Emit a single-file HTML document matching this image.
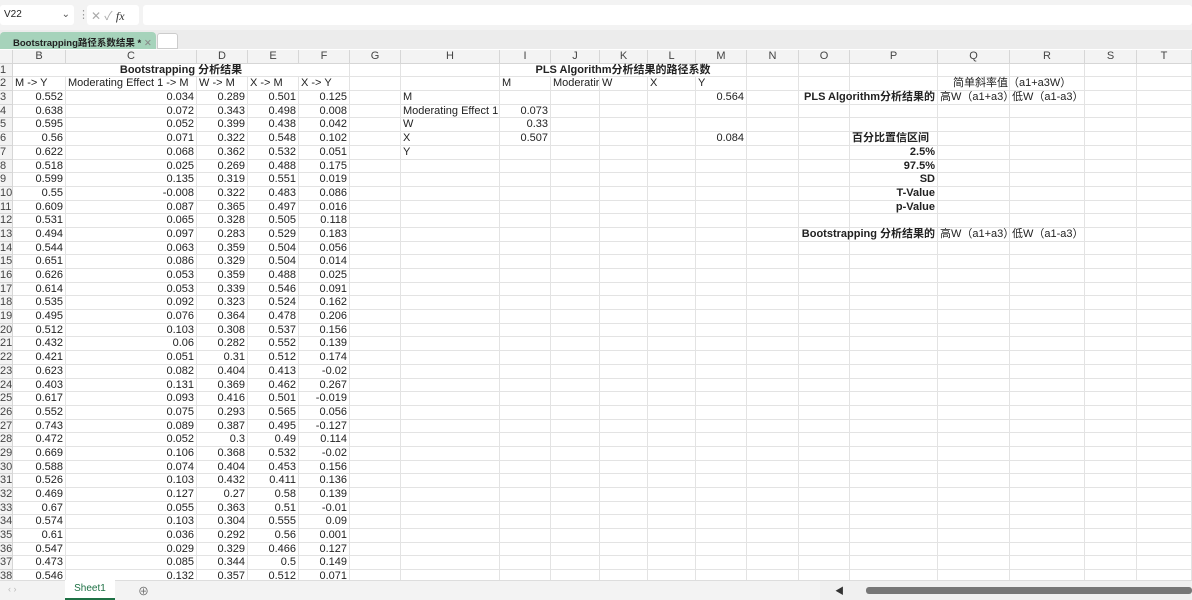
<!DOCTYPE html><html><head><meta charset="utf-8"><style>
*{margin:0;padding:0;box-sizing:border-box}
body{width:1192px;height:600px;overflow:hidden;background:#fff;font-family:"Liberation Sans","Noto Sans CJK SC",sans-serif;font-size:11px;color:#222;position:relative}
.top{position:absolute;left:0;top:0;width:1192px;height:30px;background:#f3f3f3}
.nb{position:absolute;left:0;top:5px;width:74px;height:20px;background:#fff;border-radius:3px;font-size:10px;padding:4px 4px}
.fx{position:absolute;left:87px;top:5px;width:52px;height:20px;background:#fff;border-radius:3px;color:#aaa;font-size:12px;padding:2px 4px}
.fb{position:absolute;left:143px;top:5px;width:1049px;height:20px;background:#fff;border-radius:3px}
.tabs{position:absolute;left:0;top:30px;width:1192px;height:19px;background:#ececec}
.t1{position:absolute;left:0;top:2px;width:156px;height:17px;background:#a6d3bb;border-radius:4px 4px 0 0;font-size:9.5px;font-weight:bold;padding:3px 0 0 13px;color:#222}
.t2{position:absolute;left:157px;top:3px;width:21px;height:16px;background:#fff;border:1px solid #ccc;border-radius:3px 3px 0 0}
.grid{position:absolute;left:0;top:50px}
.r{display:flex;height:13.7px}
.r span{display:block;position:relative;height:100%;border-right:1px solid #e3e3e3;border-bottom:1px solid #e3e3e3;white-space:nowrap;overflow:hidden;line-height:13px;padding:0 2px}
.h span{background:#f3f3f3;text-align:center;color:#444;border-color:#d6d6d6}
.r span:first-child{background:#f3f3f3;color:#444;padding:0;text-align:left;border-color:#d6d6d6;width:13px}
.n{text-align:right}
.b{font-weight:bold}
.r span.ov{overflow:visible}
.ov i{position:absolute;right:2px;top:0;font-style:normal}
.bot{position:absolute;left:0;top:580px;width:1192px;height:20px;background:#f3f3f3;border-top:1px solid #ddd}
</style></head><body>
<div class="top"><div class="nb">V22<span style="float:right;color:#555">⌄</span></div><span style="position:absolute;left:78px;top:8px;color:#999">⋮</span><div class="fx">✕ ✓ <i style="font-family:'Liberation Serif';color:#333">fx</i></div><div class="fb"></div></div>
<div class="tabs"><div class="t1">Bootstrapping路径系数结果 * <span style="color:#888;font-weight:normal">✕</span></div><div class="t2"></div></div>
<div class="grid" id="g"></div>
<div class="bot"><span style="position:absolute;left:8px;top:3px;color:#bbb;font-size:9px">‹ ›</span><div style="position:absolute;left:65px;top:-1px;width:50px;height:20px;background:#fff;border-bottom:2px solid #1e7145;color:#1e7145;font-size:10px;text-align:center;padding-top:3px">Sheet1</div><span style="position:absolute;left:138px;top:2px;color:#666">⊕</span><div style="position:absolute;left:820px;top:0;width:372px;height:19px;background:#f0f0f0"></div><span style="position:absolute;left:835px;top:3px;font-size:9px;color:#333">◀</span><div style="position:absolute;left:866px;top:6px;width:326px;height:7px;background:#777;border-radius:3px"></div></div>
<script>
var W=[13,53,131,51,51,51,51,99,51,49,48,48,51,52,51,88,72,75,52,55];
var L=["","B","C","D","E","F","G","H","I","J","K","L","M","N","O","P","Q","R","S","T"];
var D=`0.552 0.034 0.289 0.501 0.125
0.638 0.072 0.343 0.498 0.008
0.595 0.052 0.399 0.438 0.042
0.56 0.071 0.322 0.548 0.102
0.622 0.068 0.362 0.532 0.051
0.518 0.025 0.269 0.488 0.175
0.599 0.135 0.319 0.551 0.019
0.55 -0.008 0.322 0.483 0.086
0.609 0.087 0.365 0.497 0.016
0.531 0.065 0.328 0.505 0.118
0.494 0.097 0.283 0.529 0.183
0.544 0.063 0.359 0.504 0.056
0.651 0.086 0.329 0.504 0.014
0.626 0.053 0.359 0.488 0.025
0.614 0.053 0.339 0.546 0.091
0.535 0.092 0.323 0.524 0.162
0.495 0.076 0.364 0.478 0.206
0.512 0.103 0.308 0.537 0.156
0.432 0.06 0.282 0.552 0.139
0.421 0.051 0.31 0.512 0.174
0.623 0.082 0.404 0.413 -0.02
0.403 0.131 0.369 0.462 0.267
0.617 0.093 0.416 0.501 -0.019
0.552 0.075 0.293 0.565 0.056
0.743 0.089 0.387 0.495 -0.127
0.472 0.052 0.3 0.49 0.114
0.669 0.106 0.368 0.532 -0.02
0.588 0.074 0.404 0.453 0.156
0.526 0.103 0.432 0.411 0.136
0.469 0.127 0.27 0.58 0.139
0.67 0.055 0.363 0.51 -0.01
0.574 0.103 0.304 0.555 0.09
0.61 0.036 0.292 0.56 0.001
0.547 0.029 0.329 0.466 0.127
0.473 0.085 0.344 0.5 0.149
0.546 0.132 0.357 0.512 0.071`.split("\n").map(function(s){return s.split(" ")});
var X={};function s(r,c,t,cl){X[r+"_"+c]=[t,cl||""]}
s(2,1,"M -> Y");s(2,2,"Moderating Effect 1 -> M");s(2,3,"W -> M");s(2,4,"X -> M");s(2,5,"X -> Y");
s(2,8,"M");s(2,9,"Moderatir");s(2,10,"W");s(2,11,"X");s(2,12,"Y");
s(3,7,"M");s(3,12,"0.564","n");s(4,7,"Moderating Effect 1");s(4,8,"0.073","n");s(5,7,"W");s(5,8,"0.33","n");s(6,7,"X");s(6,8,"0.507","n");s(6,12,"0.084","n");s(7,7,"Y");
s(2,16,"简单斜率值（a1+a3W）","q");s(3,15,"PLS Algorithm分析结果的","ov b");s(3,16,"高W（a1+a3）");s(3,17,"低W（a1-a3）");
s(6,15,"百分比置信区间","b");s(7,15,"2.5%","n b");s(8,15,"97.5%","n b");s(9,15,"SD","n b");s(10,15,"T-Value","n b");s(11,15,"p-Value","n b");
s(13,15,"Bootstrapping 分析结果的","ov b");s(13,16,"高W（a1+a3）");s(13,17,"低W（a1-a3）");
var h='<div class="r h">';for(var c=0;c<20;c++)h+='<span style="width:'+W[c]+'px">'+L[c]+'</span>';h+='</div>';
for(var r=1;r<=38;r++){h+='<div class="r"><span>'+r+'</span>';
for(var c=1;c<20;c++){var t="",cl="",st="width:"+W[c]+"px";
if(r==1&&c==1){t="Bootstrapping 分析结果";cl="b";st="width:"+(53+131+51+51+51)+"px;text-align:center";h+='<span class="'+cl+'" style="'+st+'">'+t+'</span>';c=5;continue}
if(r==1&&c==7){h+='<span style="width:99px"></span><span class="b" style="width:'+(51+49+48+48+51)+'px;text-align:center;overflow:visible">PLS Algorithm分析结果的路径系数</span>';c=12;continue}
if(r>=3&&c<=5){t=D[r-3][c-1];cl="n"}
var x=X[r+"_"+c];if(x){t=x[0];cl=x[1]}
if(cl=="q"){cl="";st+=";overflow:visible;padding-left:15px"}
if(cl.indexOf("ov")>=0)t="<i>"+t+"</i>";
h+='<span class="'+cl+'" style="'+st+'">'+t+'</span>'}
h+='</div>'}
document.getElementById('g').innerHTML=h;
</script>
</body></html>
